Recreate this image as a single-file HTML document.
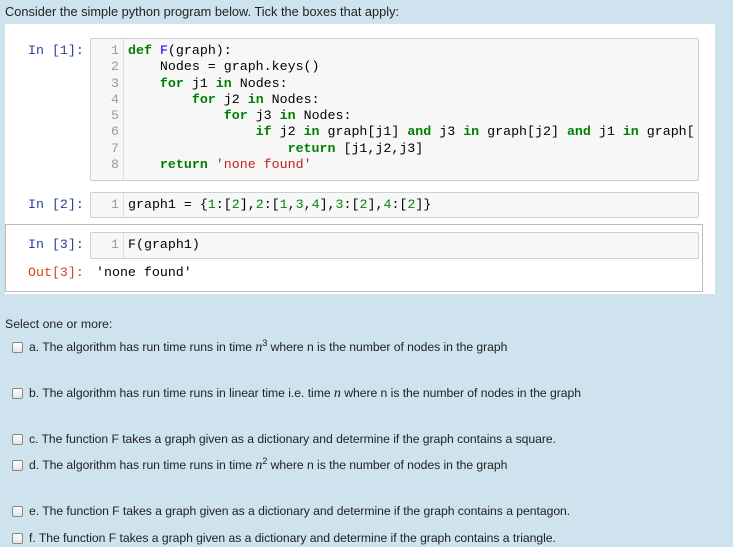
<!DOCTYPE html>
<html><head><meta charset="utf-8"><style>
body{margin:0;width:733px;height:547px;background:#cfe3ee;font-family:"Liberation Sans",sans-serif;position:relative;overflow:hidden;color:#222}
.t{position:absolute;font-size:12.3px;white-space:nowrap}
.panel{position:absolute;left:5px;top:24px;width:710px;height:270px;background:#fff}
.box{position:absolute;background:#f7f7f7;border:1px solid #cfcfcf;border-radius:2px}
.mono{font-family:"Liberation Mono",monospace;font-size:13.3px;white-space:pre;position:absolute}
.ln{color:#999;font-weight:normal;text-align:right;width:20px}
.k{color:#008000;font-weight:bold}.f{color:#0000ff}.s{color:#ba2121}.n{color:#080}
.pr{position:absolute;font-family:"Liberation Mono",monospace;font-size:13.3px;color:#303f9f}
.cb{position:absolute;left:12px;width:9px;height:9px;border:1px solid #888;border-radius:2px;background:linear-gradient(#fff,#e4e4e4)}
.opt{position:absolute;left:29px;font-size:12.2px;white-space:nowrap;color:#222;letter-spacing:-0.04px}
i{font-family:"Liberation Serif",serif;font-size:14px}
sup{font-size:9px;line-height:0}
</style></head><body>
<div class="t" style="left:5px;top:4px;font-size:12.8px">Consider the simple python program below. Tick the boxes that apply:</div>
<div class="panel"></div>
<div class="pr" style="left:28px;top:43px">In [1]:</div>
<div class="box" style="left:90px;top:38px;width:607px;height:141px"></div>
<div style="position:absolute;left:123px;top:39px;width:1px;height:141px;background:#ddd"></div>
<div class="mono ln" style="left:99px;top:43px;line-height:16.3px">1
2
3
4
5
6
7
8</div>
<div class="mono" style="left:128px;top:43px;line-height:16.3px;color:#000"><span class="k">def</span> <span class="f">F</span>(graph):
    Nodes = graph.keys()
    <span class="k">for</span> j1 <span class="k">in</span> Nodes:
        <span class="k">for</span> j2 <span class="k">in</span> Nodes:
            <span class="k">for</span> j3 <span class="k">in</span> Nodes:
                <span class="k">if</span> j2 <span class="k">in</span> graph[j1] <span class="k">and</span> j3 <span class="k">in</span> graph[j2] <span class="k">and</span> j1 <span class="k">in</span> graph[
                    <span class="k">return</span> [j1,j2,j3]
    <span class="k">return</span> <span class="s">'none found'</span></div>
<div class="pr" style="left:28px;top:197px">In [2]:</div>
<div class="box" style="left:90px;top:192px;width:607px;height:24px"></div>
<div style="position:absolute;left:123px;top:193px;width:1px;height:24px;background:#ddd"></div>
<div class="mono ln" style="left:99px;top:197px">1</div>
<div class="mono" style="left:128px;top:197px;color:#000">graph1 = {<span class="n">1</span>:[<span class="n">2</span>],<span class="n">2</span>:[<span class="n">1</span>,<span class="n">3</span>,<span class="n">4</span>],<span class="n">3</span>:[<span class="n">2</span>],<span class="n">4</span>:[<span class="n">2</span>]}</div>
<div style="position:absolute;left:5px;top:224px;width:696px;height:66px;border:1px solid #bbb"></div>
<div class="pr" style="left:28px;top:237px">In [3]:</div>
<div class="box" style="left:90px;top:232px;width:607px;height:25px"></div>
<div style="position:absolute;left:123px;top:233px;width:1px;height:25px;background:#ddd"></div>
<div class="mono ln" style="left:99px;top:237px">1</div>
<div class="mono" style="left:128px;top:237px;color:#000">F(graph1)</div>
<div class="pr" style="left:28px;top:265px;color:#d84315">Out[3]:</div>
<div class="mono" style="left:96px;top:265px;color:#000">'none found'</div>
<div class="t" style="left:5px;top:317px">Select one or more:</div>
<div class="cb" style="top:342px"></div><div class="opt" style="top:340px">a. The algorithm has run time runs in time <i>n</i><sup>3</sup> where n is the number of nodes in the graph</div>
<div class="cb" style="top:388px"></div><div class="opt" style="top:386px">b. The algorithm has run time runs in linear time i.e. time <i>n</i> where n is the number of nodes in the graph</div>
<div class="cb" style="top:434px"></div><div class="opt" style="top:432px">c. The function F takes a graph given as a dictionary and determine if the graph contains a square.</div>
<div class="cb" style="top:460px"></div><div class="opt" style="top:458px">d. The algorithm has run time runs in time <i>n</i><sup>2</sup> where n is the number of nodes in the graph</div>
<div class="cb" style="top:506px"></div><div class="opt" style="top:504px">e. The function F takes a graph given as a dictionary and determine if the graph contains a pentagon.</div>
<div class="cb" style="top:533px"></div><div class="opt" style="top:531px">f. The function F takes a graph given as a dictionary and determine if the graph contains a triangle.</div>
</body></html>
